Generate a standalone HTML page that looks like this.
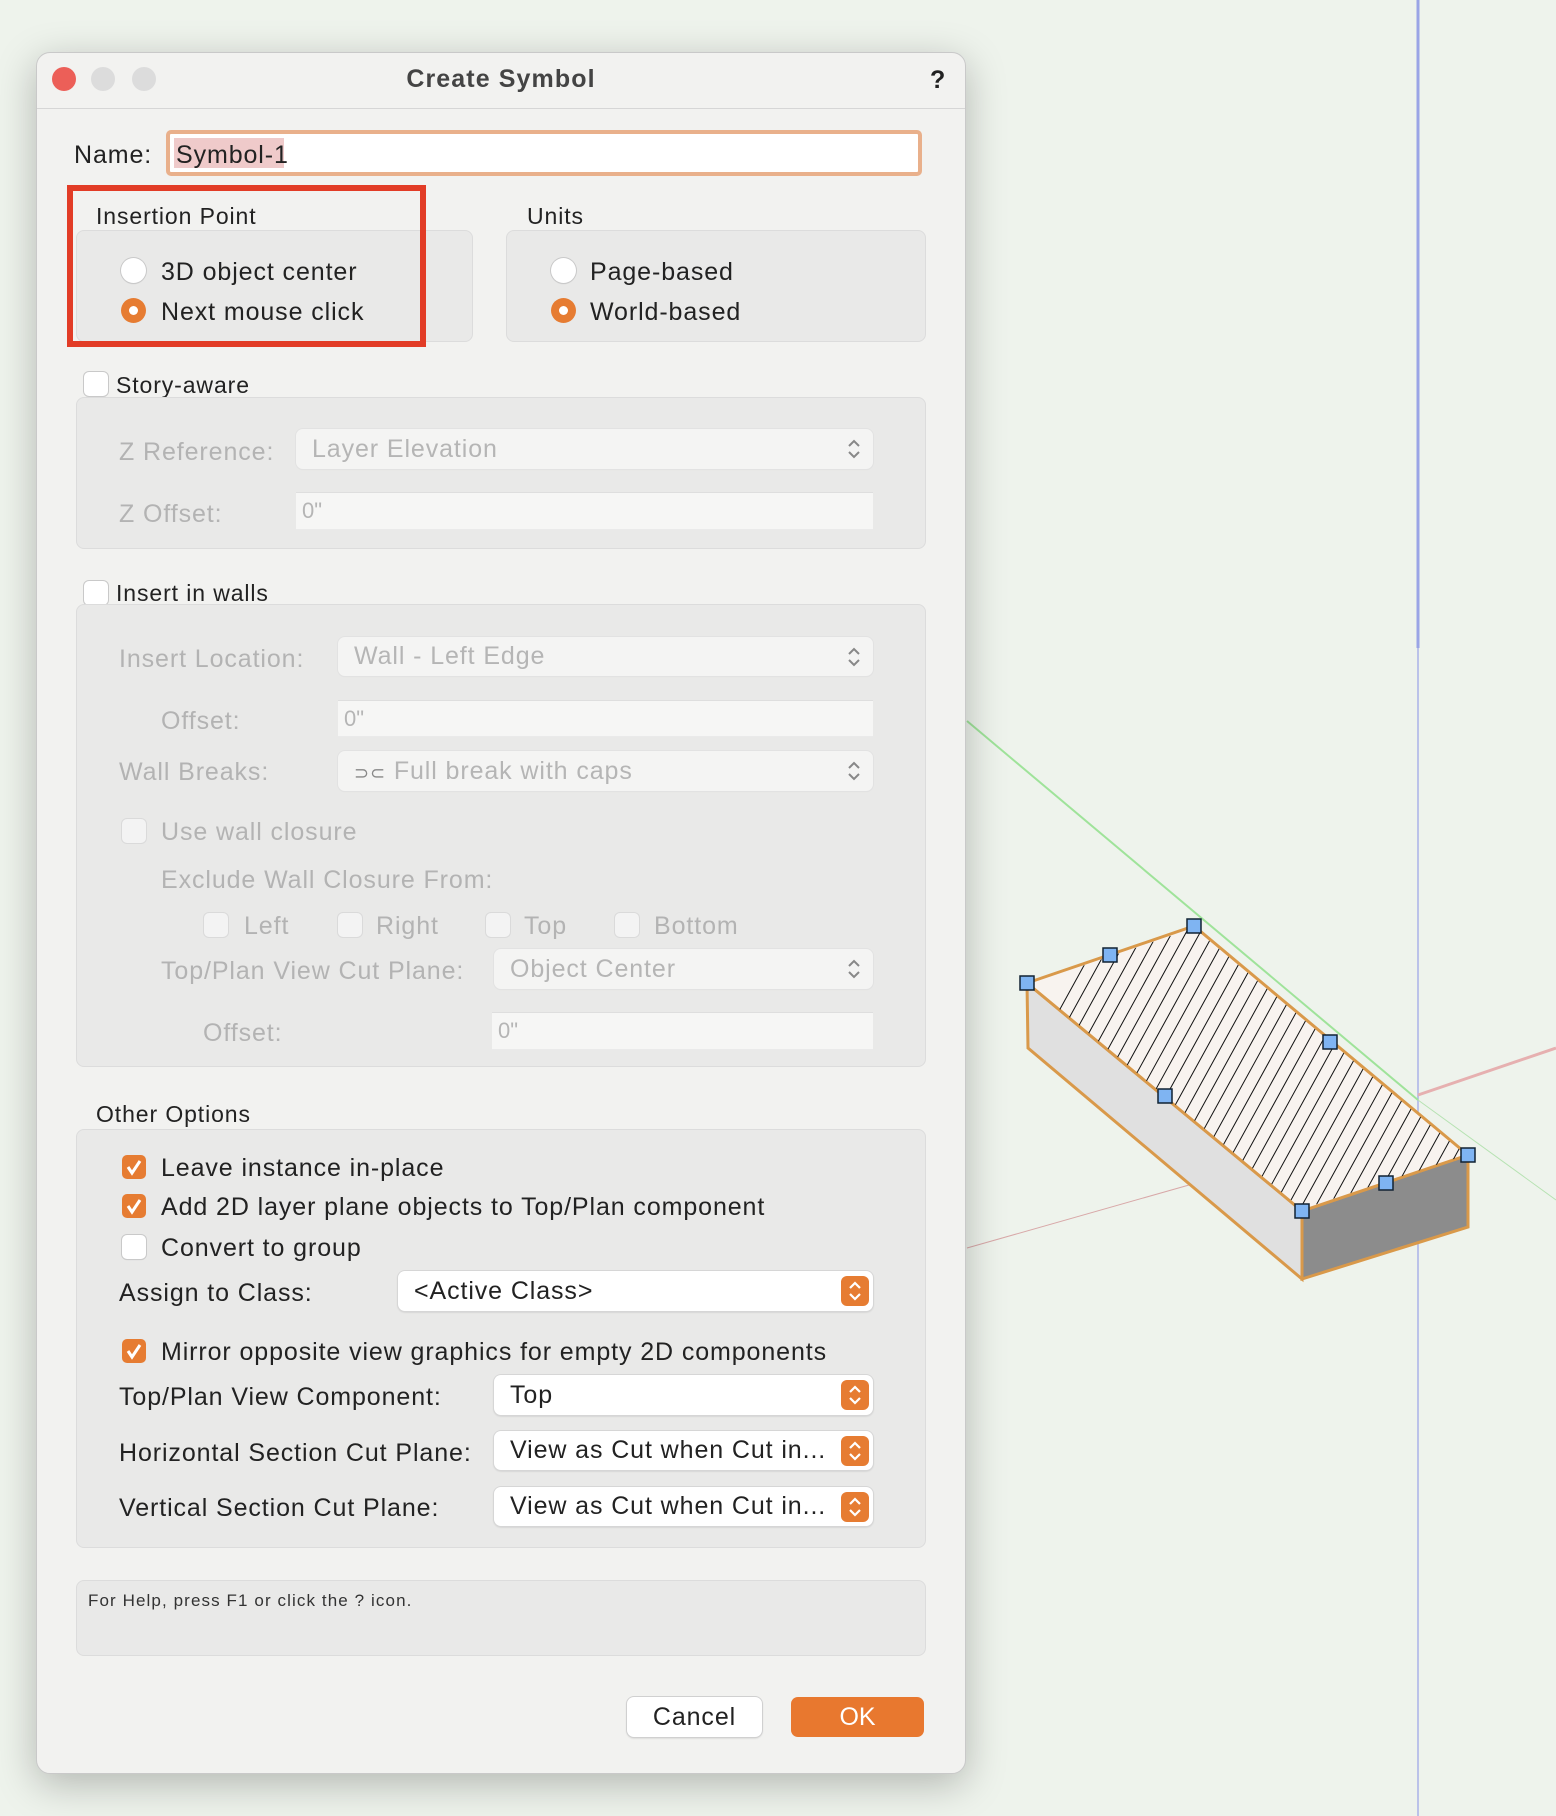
<!DOCTYPE html>
<html><head><meta charset="utf-8">
<style>
*{box-sizing:border-box;margin:0;padding:0}
body{width:1556px;height:1816px;background:#eef3ec;position:relative;overflow:hidden;font-family:"Liberation Sans",sans-serif;color:#222}
.a{position:absolute}
.t{position:absolute;font-size:25px;line-height:30px;white-space:nowrap;letter-spacing:0.9px}
.d{color:#b3b3b3}
.s{position:absolute;font-size:23px;line-height:26px;white-space:nowrap;letter-spacing:0.9px}
.box{position:absolute;background:#e9e9e8;border:1px solid #dcdcdc;border-radius:8px}
.pop{position:absolute;background:#fff;border-radius:7px;box-shadow:0 0 0 1px #d6d6d6,0 1px 2px rgba(0,0,0,.18);font-size:25px;line-height:30px;padding-left:16px;letter-spacing:0.9px}
.pop.dis{background:#f4f4f3;color:#b5b5b5;box-shadow:0 0 0 1px #e2e2e2,0 1px 1px rgba(0,0,0,.06)}
.fld{position:absolute;background:#f6f6f5;border-top:1px solid #dedede;border-bottom:1px solid #eaeaea;color:#b5b5b5;font-size:22px;line-height:36px;padding-left:6px}
.arr{position:absolute;right:10px;top:50%;margin-top:-13px;width:18px;height:26px}
.oarr{position:absolute;right:4px;top:50%;margin-top:-15px;width:28px;height:30px;background:#e67c32;border-radius:6px}
.rad{position:absolute;width:25px;height:25px;border-radius:50%;background:#fff;box-shadow:0 0 0 1px #c9c9c9,0 1px 1px rgba(0,0,0,.15)}
.rad.on{background:#e67c32;box-shadow:none}
.rad.on::after{content:"";position:absolute;left:8px;top:8px;width:9px;height:9px;border-radius:50%;background:#fff}
.cb{position:absolute;width:24px;height:24px;border-radius:5px;background:#fff;box-shadow:0 0 0 1px #c9c9c9,0 1px 1px rgba(0,0,0,.12)}
.cb.dis{background:#f3f3f3;box-shadow:0 0 0 1px #dadada}
.cb.on{background:#e67c32;box-shadow:none}
</style></head><body>

<svg class="a" style="left:0;top:0" width="1556" height="1816">
<line x1="1418" y1="0" x2="1418" y2="648" stroke="#9aa4e6" stroke-width="3"/>
<line x1="1418" y1="648" x2="1418" y2="1816" stroke="#aab2e8" stroke-width="1.5"/>
<line x1="967" y1="721" x2="1418" y2="1100" stroke="#9fe39a" stroke-width="2"/>
<line x1="1418" y1="1100" x2="1556" y2="1200" stroke="#b6e2b2" stroke-width="1"/>
<line x1="967" y1="1248" x2="1418" y2="1120" stroke="#d8a8a8" stroke-width="1"/>
<line x1="1418" y1="1095" x2="1556" y2="1048" stroke="#e6b0b0" stroke-width="3"/>
<polygon points="1027,983 1302,1211 1302,1279 1028,1048" fill="#e0e0e0" stroke="#d9994a" stroke-width="3"/>
<polygon points="1302,1211 1468,1155 1468,1227 1302,1279" fill="#8c8c8c" stroke="#d9994a" stroke-width="3"/>
<polygon points="1027,983 1194,926 1468,1155 1302,1211" fill="#f8f3ef" stroke="#d9994a" stroke-width="3"/>
<clipPath id="cp"><polygon points="1029,984 1194,928 1466,1155 1302,1209"/></clipPath>
<g clip-path="url(#cp)" stroke="#111" stroke-width="1">
<line x1="900" y1="1300" x2="1120" y2="900"/><line x1="914" y1="1300" x2="1134" y2="900"/><line x1="928" y1="1300" x2="1148" y2="900"/><line x1="942" y1="1300" x2="1162" y2="900"/><line x1="956" y1="1300" x2="1176" y2="900"/><line x1="970" y1="1300" x2="1190" y2="900"/><line x1="984" y1="1300" x2="1204" y2="900"/><line x1="998" y1="1300" x2="1218" y2="900"/><line x1="1012" y1="1300" x2="1232" y2="900"/><line x1="1026" y1="1300" x2="1246" y2="900"/><line x1="1040" y1="1300" x2="1260" y2="900"/><line x1="1054" y1="1300" x2="1274" y2="900"/><line x1="1068" y1="1300" x2="1288" y2="900"/><line x1="1082" y1="1300" x2="1302" y2="900"/><line x1="1096" y1="1300" x2="1316" y2="900"/><line x1="1110" y1="1300" x2="1330" y2="900"/><line x1="1124" y1="1300" x2="1344" y2="900"/><line x1="1138" y1="1300" x2="1358" y2="900"/><line x1="1152" y1="1300" x2="1372" y2="900"/><line x1="1166" y1="1300" x2="1386" y2="900"/><line x1="1180" y1="1300" x2="1400" y2="900"/><line x1="1194" y1="1300" x2="1414" y2="900"/><line x1="1208" y1="1300" x2="1428" y2="900"/><line x1="1222" y1="1300" x2="1442" y2="900"/><line x1="1236" y1="1300" x2="1456" y2="900"/><line x1="1250" y1="1300" x2="1470" y2="900"/><line x1="1264" y1="1300" x2="1484" y2="900"/><line x1="1278" y1="1300" x2="1498" y2="900"/><line x1="1292" y1="1300" x2="1512" y2="900"/><line x1="1306" y1="1300" x2="1526" y2="900"/><line x1="1320" y1="1300" x2="1540" y2="900"/><line x1="1334" y1="1300" x2="1554" y2="900"/><line x1="1348" y1="1300" x2="1568" y2="900"/><line x1="1362" y1="1300" x2="1582" y2="900"/><line x1="1376" y1="1300" x2="1596" y2="900"/><line x1="1390" y1="1300" x2="1610" y2="900"/>
</g>
<g fill="#7fb4f2" stroke="#123" stroke-width="1.5">
<rect x="1020" y="976" width="14" height="14"/><rect x="1187" y="919" width="14" height="14"/>
<rect x="1461" y="1148" width="14" height="14"/><rect x="1295" y="1204" width="14" height="14"/>
<rect x="1103" y="948" width="14" height="14"/><rect x="1323" y="1035" width="14" height="14"/>
<rect x="1158" y="1089" width="14" height="14"/><rect x="1379" y="1176" width="14" height="14"/>
</g>
</svg>

<div class="a" style="left:36px;top:52px;width:930px;height:1722px;background:#f2f2f0;border-radius:14px;border:1px solid #c9c9c9;box-shadow:0 10px 40px rgba(0,0,0,.25)"></div>
<div class="a" style="left:37px;top:108px;width:928px;height:1px;background:#d6d6d6"></div>
<div class="a" style="left:52px;top:67px;width:24px;height:24px;border-radius:50%;background:#ec5f58"></div>
<div class="a" style="left:91px;top:67px;width:24px;height:24px;border-radius:50%;background:#dcdcdc"></div>
<div class="a" style="left:132px;top:67px;width:24px;height:24px;border-radius:50%;background:#dcdcdc"></div>
<div class="t" style="left:36px;width:930px;text-align:center;top:64px;font-weight:bold;color:#444;letter-spacing:1.1px">Create Symbol</div>
<div class="t" style="left:930px;top:65px;font-weight:bold">?</div>

<div class="t" style="left:74px;top:140px">Name:</div>
<div class="a" style="left:166px;top:130px;width:756px;height:46px;border:4px solid #e9b08b;border-radius:5px;background:#fff"></div>
<div class="a" style="left:174px;top:138px;width:110px;height:30px;background:#efcaca"></div>
<div class="t" style="left:176px;top:140px">Symbol-1</div>

<div class="box" style="left:76px;top:230px;width:397px;height:112px"></div>
<div class="box" style="left:506px;top:230px;width:420px;height:112px"></div>
<div class="a" style="left:67px;top:185px;width:359px;height:162px;border:6px solid #e23c26"></div>
<div class="s" style="left:96px;top:203px">Insertion Point</div>
<div class="s" style="left:527px;top:203px">Units</div>
<div class="rad" style="left:121px;top:258px"></div>
<div class="t" style="left:161px;top:257px">3D object center</div>
<div class="rad on" style="left:121px;top:298px"></div>
<div class="t" style="left:161px;top:297px">Next mouse click</div>
<div class="rad" style="left:551px;top:258px"></div>
<div class="t" style="left:590px;top:257px">Page-based</div>
<div class="rad on" style="left:551px;top:298px"></div>
<div class="t" style="left:590px;top:297px">World-based</div>

<div class="cb" style="left:84px;top:372px"></div>
<div class="s" style="left:116px;top:372px">Story-aware</div>
<div class="box" style="left:76px;top:397px;width:850px;height:152px"></div>
<div class="t d" style="left:119px;top:437px">Z Reference:</div>
<div class="pop dis" style="left:296px;top:429px;width:577px;height:40px;line-height:40px">Layer Elevation<svg class="arr" viewBox="0 0 18 26"><path d="M4 10l5-5 5 5M4 16l5 5 5-5" fill="none" stroke="#888" stroke-width="2"/></svg></div>
<div class="t d" style="left:119px;top:499px">Z Offset:</div>
<div class="fld" style="left:296px;top:492px;width:577px;height:38px">0"</div>

<div class="cb" style="left:84px;top:581px"></div>
<div class="s" style="left:116px;top:580px">Insert in walls</div>
<div class="box" style="left:76px;top:604px;width:850px;height:463px"></div>
<div class="t d" style="left:119px;top:644px">Insert Location:</div>
<div class="pop dis" style="left:338px;top:637px;width:535px;height:39px;line-height:39px">Wall - Left Edge<svg class="arr" viewBox="0 0 18 26"><path d="M4 10l5-5 5 5M4 16l5 5 5-5" fill="none" stroke="#888" stroke-width="2"/></svg></div>
<div class="t d" style="left:161px;top:706px">Offset:</div>
<div class="fld" style="left:338px;top:700px;width:535px;height:37px">0"</div>
<div class="t d" style="left:119px;top:757px">Wall Breaks:</div>
<div class="pop dis" style="left:338px;top:751px;width:535px;height:40px;line-height:40px"><span style="font-size:18px;color:#888">&#x2283;&#x2282;</span> Full break with caps<svg class="arr" viewBox="0 0 18 26"><path d="M4 10l5-5 5 5M4 16l5 5 5-5" fill="none" stroke="#888" stroke-width="2"/></svg></div>
<div class="cb dis" style="left:122px;top:819px"></div>
<div class="t d" style="left:161px;top:817px">Use wall closure</div>
<div class="t d" style="left:161px;top:865px">Exclude Wall Closure From:</div>
<div class="cb dis" style="left:204px;top:913px"></div><div class="t d" style="left:244px;top:911px">Left</div>
<div class="cb dis" style="left:338px;top:913px"></div><div class="t d" style="left:376px;top:911px">Right</div>
<div class="cb dis" style="left:486px;top:913px"></div><div class="t d" style="left:524px;top:911px">Top</div>
<div class="cb dis" style="left:615px;top:913px"></div><div class="t d" style="left:654px;top:911px">Bottom</div>
<div class="t d" style="left:161px;top:956px">Top/Plan View Cut Plane:</div>
<div class="pop dis" style="left:494px;top:949px;width:379px;height:40px;line-height:40px">Object Center<svg class="arr" viewBox="0 0 18 26"><path d="M4 10l5-5 5 5M4 16l5 5 5-5" fill="none" stroke="#888" stroke-width="2"/></svg></div>
<div class="t d" style="left:203px;top:1018px">Offset:</div>
<div class="fld" style="left:492px;top:1012px;width:381px;height:38px">0"</div>

<div class="s" style="left:96px;top:1101px">Other Options</div>
<div class="box" style="left:76px;top:1129px;width:850px;height:419px"></div>
<div class="cb on" style="left:122px;top:1155px"><svg width="24" height="24"><path d="M6 12l4 6 8-12" fill="none" stroke="#fff" stroke-width="3"/></svg></div>
<div class="t" style="left:161px;top:1153px">Leave instance in-place</div>
<div class="cb on" style="left:122px;top:1194px"><svg width="24" height="24"><path d="M6 12l4 6 8-12" fill="none" stroke="#fff" stroke-width="3"/></svg></div>
<div class="t" style="left:161px;top:1192px">Add 2D layer plane objects to Top/Plan component</div>
<div class="cb" style="left:122px;top:1235px"></div>
<div class="t" style="left:161px;top:1233px">Convert to group</div>
<div class="t" style="left:119px;top:1278px">Assign to Class:</div>
<div class="pop" style="left:398px;top:1271px;width:475px;height:40px;line-height:40px">&lt;Active Class&gt;<svg class="oarr" viewBox="0 0 28 30"><path d="M9 12l5-5 5 5M9 18l5 5 5-5" fill="none" stroke="#fff" stroke-width="2.2"/></svg></div>
<div class="cb on" style="left:122px;top:1339px"><svg width="24" height="24"><path d="M6 12l4 6 8-12" fill="none" stroke="#fff" stroke-width="3"/></svg></div>
<div class="t" style="left:161px;top:1337px">Mirror opposite view graphics for empty 2D components</div>
<div class="t" style="left:119px;top:1382px">Top/Plan View Component:</div>
<div class="pop" style="left:494px;top:1375px;width:379px;height:40px;line-height:40px">Top<svg class="oarr" viewBox="0 0 28 30"><path d="M9 12l5-5 5 5M9 18l5 5 5-5" fill="none" stroke="#fff" stroke-width="2.2"/></svg></div>
<div class="t" style="left:119px;top:1438px">Horizontal Section Cut Plane:</div>
<div class="pop" style="left:494px;top:1431px;width:379px;height:39px;line-height:39px">View as Cut when Cut in...<svg class="oarr" viewBox="0 0 28 30"><path d="M9 12l5-5 5 5M9 18l5 5 5-5" fill="none" stroke="#fff" stroke-width="2.2"/></svg></div>
<div class="t" style="left:119px;top:1493px">Vertical Section Cut Plane:</div>
<div class="pop" style="left:494px;top:1487px;width:379px;height:39px;line-height:39px">View as Cut when Cut in...<svg class="oarr" viewBox="0 0 28 30"><path d="M9 12l5-5 5 5M9 18l5 5 5-5" fill="none" stroke="#fff" stroke-width="2.2"/></svg></div>

<div class="box" style="left:76px;top:1580px;width:850px;height:76px"></div>
<div class="a" style="left:88px;top:1590px;font-size:17px;line-height:22px;color:#333;letter-spacing:1.1px;white-space:nowrap">For Help, press F1 or click the ? icon.</div>

<div class="a" style="left:627px;top:1697px;width:135px;height:40px;background:#fff;border-radius:7px;box-shadow:0 0 0 1px #d0d0d0,0 1px 2px rgba(0,0,0,.2);text-align:center;font-size:25px;line-height:40px;letter-spacing:0.9px">Cancel</div>
<div class="a" style="left:791px;top:1697px;width:133px;height:40px;background:#e8782f;border-radius:7px;text-align:center;font-size:25px;line-height:40px;color:#fff">OK</div>
</body></html>
